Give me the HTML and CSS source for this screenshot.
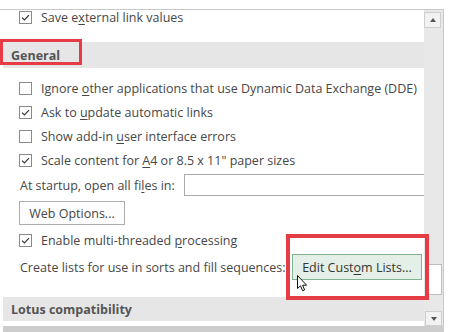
FILE: index.html
```html
<!DOCTYPE html>
<html>
<head>
<meta charset="utf-8">
<link rel="stylesheet" href="styles.css">
</head>
<body>
<div class="frame">
  <div class="panel">
    <div class="content">
      <div class="row row-save">
        <svg class="cb" width="13" height="13" viewBox="0 0 13 13"><rect x="0.5" y="0.5" width="12" height="12" fill="#fff" stroke="#8a8a8a"/><path d="M3 6.6 L5.4 9 L10 4.2" fill="none" stroke="#333" stroke-width="1.2"/></svg>
        <span>Save e<u>x</u>ternal link values</span>
      </div>
      <div class="band band-general"><span>General</span><span class="hl hl-general"></span></div>
      <div class="row row-first">
        <svg class="cb" width="13" height="13" viewBox="0 0 13 13"><rect x="0.5" y="0.5" width="12" height="12" fill="#fff" stroke="#8a8a8a"/></svg>
        <span>Ignore <u>o</u>ther applications that use Dynamic Data Exchange (DDE)</span>
      </div>
      <div class="row">
        <svg class="cb" width="13" height="13" viewBox="0 0 13 13"><rect x="0.5" y="0.5" width="12" height="12" fill="#fff" stroke="#8a8a8a"/><path d="M3 6.6 L5.4 9 L10 4.2" fill="none" stroke="#333" stroke-width="1.2"/></svg>
        <span>Ask to <u>u</u>pdate automatic links</span>
      </div>
      <div class="row">
        <svg class="cb" width="13" height="13" viewBox="0 0 13 13"><rect x="0.5" y="0.5" width="12" height="12" fill="#fff" stroke="#8a8a8a"/></svg>
        <span>Show add-in <u>u</u>ser interface errors</span>
      </div>
      <div class="row">
        <svg class="cb" width="13" height="13" viewBox="0 0 13 13"><rect x="0.5" y="0.5" width="12" height="12" fill="#fff" stroke="#8a8a8a"/><path d="M3 6.6 L5.4 9 L10 4.2" fill="none" stroke="#333" stroke-width="1.2"/></svg>
        <span>Scale content for <u>A</u>4 or 8.5 x 11" paper sizes</span>
      </div>
      <div class="row row-startup">
        <span class="lbl">At startup, open all fi<u>l</u>es in:</span>
        <span class="input"></span>
      </div>
      <div class="btnrow"><span class="btn btn-web">Web Options...</span></div>
      <div class="row row-enable">
        <svg class="cb" width="13" height="13" viewBox="0 0 13 13"><rect x="0.5" y="0.5" width="12" height="12" fill="#fff" stroke="#8a8a8a"/><path d="M3 6.6 L5.4 9 L10 4.2" fill="none" stroke="#333" stroke-width="1.2"/></svg>
        <span>Enable multi-threaded <u>p</u>rocessing</span>
      </div>
      <div class="row row-create">
        <span class="lbl">Create lists for use in sorts and fill sequences:</span>
        <span class="btn btn-edit">Edit Cust<u>o</u>m Lists...
          <span class="hl hl-edit"></span>
          <svg class="cursor" width="12" height="18" viewBox="0 0 12 18"><path d="M0.5 0.5 L0.5 13.5 L3.5 10.8 L5.6 15.8 L7.6 14.9 L5.6 10.2 L9.6 10.2 Z" fill="#fff" stroke="#111" stroke-width="1" stroke-linejoin="round"/></svg>
        </span>
      </div>
      <div class="band band-lotus"><span>Lotus compatibility</span></div>
    </div>
    <div class="scrollbar">
      <div class="sbtn sbtn-up"><span class="tri-up"></span></div>
      <div class="thumb"></div>
      <div class="sbtn sbtn-down"><span class="tri-down"></span></div>
    </div>
  </div>
  <div class="bottombar"></div>
</div>
</body>
</html>
```

FILE: styles.css
```css
html, body {
  margin: 0;
  padding: 0;
}
body {
  width: 450px;
  height: 332px;
  overflow: hidden;
  background: #fff;
  font-family: "Open Sans", "Noto Sans", sans-serif;
  font-size: 12.5px;
  color: #474747;
}
u {
  text-decoration: underline;
  text-underline-offset: 2px;
}
.frame {
  padding-top: 9px;
  height: 332px;
  box-sizing: border-box;
  display: flex;
  flex-direction: column;
}
.panel {
  width: 444px;
  height: 317px;
  flex: 0 0 317px;
  box-sizing: border-box;
  border-top: 1px solid #c8c8c8;
  border-right: 1px solid #c8c8c8;
  display: flex;
}
.content {
  width: 424px;
  flex: 0 0 424px;
  box-sizing: border-box;
  padding-left: 3px;
  display: flex;
  flex-direction: column;
}
.row {
  height: 24px;
  margin-left: 16px;
  display: flex;
  align-items: center;
  white-space: nowrap;
}
.row .cb {
  flex: 0 0 13px;
  margin-right: 9px;
}
.row-save {
  height: 14px;
}
.band {
  position: relative;
  background: #e6e6e6;
  display: flex;
  align-items: center;
  padding-left: 8px;
  font-weight: 700;
  color: #555;
}
.band-general {
  margin-top: 18px;
  height: 26px;
}
.band-lotus {
  margin-top: 17px;
  height: 24px;
}
.row-first {
  margin-top: 8px;
}
.row-startup {
  height: 26px;
  margin-left: 17px;
  justify-content: space-between;
}
.row-startup .input {
  flex: 0 0 240px;
  height: 22px;
  box-sizing: border-box;
  border: 1px solid #ababab;
  border-right: none;
  background: #fff;
}
.btnrow {
  margin-top: 3px;
  margin-left: 16px;
  display: flex;
}
.btn {
  display: flex;
  align-items: center;
  justify-content: center;
  box-sizing: border-box;
  white-space: nowrap;
}
.btn-web {
  width: 106px;
  height: 24px;
  border: 1px solid #adadad;
  background: #fdfdfd;
}
.row-enable {
  margin-top: 3px;
}
.row-create {
  margin-top: 2px;
  height: 26px;
  margin-left: 17px;
  justify-content: space-between;
}
.btn-edit {
  position: relative;
  width: 130px;
  height: 26px;
  margin-right: 2px;
  border: 1px solid #80b38e;
  background: #e4f0e7;
  color: #333;
}
.hl {
  position: absolute;
  box-sizing: border-box;
  border: 3px solid #e63c45;
  z-index: 2;
}
.hl-general {
  left: -3px;
  top: -3px;
  width: 82px;
  height: 26px;
}
.hl-edit {
  left: -7px;
  top: -21px;
  width: 143px;
  height: 66px;
  border-width: 4px;
}
.cursor {
  position: absolute;
  left: 4px;
  top: 20px;
  z-index: 3;
}
.scrollbar {
  position: relative;
  width: 19px;
  flex: 0 0 19px;
  background: #e8e8e8;
  display: flex;
  flex-direction: column;
}
.sbtn {
  width: 17px;
  height: 16px;
  box-sizing: border-box;
  border: 1px solid #cfcfcf;
  background: #f2f2f2;
  display: flex;
  align-items: center;
  justify-content: center;
}
.sbtn-up {
  margin-top: 2px;
}
.thumb {
  margin-top: 236px;
  margin-left: 1px;
  width: 17px;
  height: 31px;
  box-sizing: border-box;
  border: 1px solid #bdbdbd;
  background: #fff;
}
.sbtn-down {
  margin-top: 16px;
  margin-left: 1px;
  height: 15px;
}
.tri-up {
  width: 0;
  height: 0;
  border-left: 3.5px solid transparent;
  border-right: 3.5px solid transparent;
  border-bottom: 4px solid #555;
}
.tri-down {
  width: 0;
  height: 0;
  border-left: 3.5px solid transparent;
  border-right: 3.5px solid transparent;
  border-top: 4px solid #555;
}
.bottombar {
  margin-left: 3px;
  width: 441px;
  height: 6px;
  background: #cdcdcd;
}
```
